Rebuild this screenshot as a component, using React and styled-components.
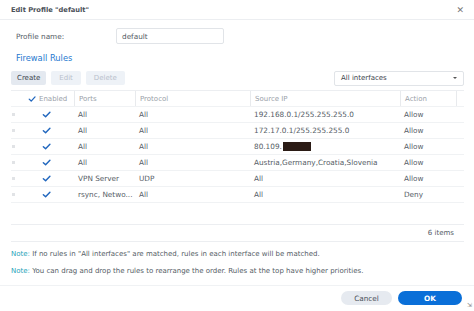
import React from 'react'
import styled, { createGlobalStyle } from 'styled-components'

const Global = createGlobalStyle`
  html, body { margin: 0; padding: 0; background: #fff; }
  body {
    width: 474px;
    height: 311px;
    overflow: hidden;
    font-family: "DejaVu Sans", Verdana, sans-serif;
    color: #555d66;
  }
`

const Dialog = styled.div`
  width: 474px;
  height: 311px;
  display: flex;
  flex-direction: column;
  position: relative;
`

const Header = styled.div`
  height: 19px;
  display: flex;
  align-items: center;
  justify-content: space-between;
  padding: 0 10px 0 11px;
  border-bottom: 1px solid #eceef1;
  font-size: 6.7px;
  font-weight: bold;
  color: #4a5058;
`

const Close = styled.span`
  font-size: 9px;
  font-weight: normal;
  color: #777;
`

const Body = styled.div`
  padding: 0 10px 0 11px;
  display: flex;
  flex-direction: column;
`

const FieldRow = styled.div`
  margin-top: 8px;
  height: 16px;
  display: flex;
  align-items: center;
  font-size: 7.3px;
`

const Label = styled.span`
  width: 100px;
  padding-left: 5px;
`

const Input = styled.div`
  width: 101px;
  height: 14px;
  border: 1px solid #e1e4e8;
  border-radius: 2px;
  padding-left: 5px;
  display: flex;
  align-items: center;
`

const SectionTitle = styled.div`
  margin-top: 8px;
  padding-left: 5px;
  height: 13px;
  line-height: 13px;
  font-size: 8.3px;
  color: #1f79cf;
`

const Toolbar = styled.div`
  margin-top: 6px;
  height: 14px;
  display: flex;
  align-items: center;
  gap: 5px;
`

const Button = styled.div`
  height: 14px;
  padding: 0 ${p => p.$pad || 6}px;
  border-radius: 2px;
  display: flex;
  align-items: center;
  font-size: 7px;
  background: ${p => (p.$disabled ? '#eef2f7' : '#e4e9f0')};
  color: ${p => (p.$disabled ? '#b9c1cc' : '#3d444c')};
`

const Select = styled.div`
  margin-left: auto;
  width: 116px;
  height: 13px;
  border: 1px solid #e1e4e8;
  border-radius: 2px;
  padding: 0 6px;
  display: flex;
  align-items: center;
  justify-content: space-between;
  font-size: 7px;
  color: #3d444c;
`

const Caret = styled.span`
  width: 0;
  height: 0;
  border-left: 2px solid transparent;
  border-right: 2px solid transparent;
  border-top: 2.5px solid #555;
`

const Table = styled.div`
  margin-top: 5px;
  border-top: 1px solid #eceef1;
  display: flex;
  flex-direction: column;
  height: 151px;
`

const Row = styled.div`
  height: 16px;
  display: grid;
  grid-template-columns: 13px 50px 61px 115px 150px 56px 1fr;
  align-items: center;
  border-bottom: 1px solid #f0f2f4;
  box-sizing: border-box;
  font-size: ${p => (p.$head ? 7 : 7.3)}px;
  color: ${p => (p.$head ? '#9aa1a9' : '#555d66')};
`

const Cell = styled.div`
  height: 100%;
  display: flex;
  align-items: center;
  padding-left: ${p => p.$pad ?? 4}px;
  gap: 3px;
  white-space: nowrap;
  overflow: hidden;
  border-left: ${p => (p.$sep ? '1px solid #e8eaed' : 'none')};
  box-sizing: border-box;
`

const Handle = styled.span`
  width: 3px;
  height: 3px;
  margin-left: 1px;
  background: #e1e3e6;
`

const Redacted = styled.span`
  display: inline-block;
  width: 28px;
  height: 9px;
  background: #2b1b15;
  margin-left: 1px;
  vertical-align: middle;
`

const Filler = styled.div`
  flex: 1;
  border-bottom: 1px solid #eceef1;
`

const Count = styled.div`
  height: 16px;
  display: flex;
  align-items: center;
  justify-content: flex-end;
  padding-right: 10px;
  border-bottom: 1px solid #eceef1;
  font-size: 7px;
`

const Notes = styled.div`
  padding: 6px 0 0 11px;
  display: flex;
  flex-direction: column;
  gap: 5px;
  font-size: 7px;
  height: 44px;
  box-sizing: border-box;
  border-bottom: 1px solid #f0f2f4;
`

const Note = styled.div`
  height: 12px;
  line-height: 12px;
  white-space: nowrap;
  b { font-weight: normal; color: #27a4b9; }
`

const Footer = styled.div`
  display: flex;
  justify-content: flex-end;
  gap: 6px;
  padding: 5px 12px 0 0;
`

const DialogButton = styled.div`
  height: 14px;
  width: ${p => p.$w}px;
  border-radius: 7px;
  display: flex;
  align-items: center;
  justify-content: center;
  font-size: 7.3px;
  background: ${p => (p.$primary ? '#0a6fd8' : '#e6eaf0')};
  color: ${p => (p.$primary ? '#fff' : '#4a5058')};
  font-weight: ${p => (p.$primary ? 'bold' : 'normal')};
`

const Grip = styled.span`
  position: absolute;
  right: 2px;
  bottom: 3px;
  font-size: 6px;
  color: #888;
`

const Check = ({ size = 9 }) => (
  <svg width={size} height={size} viewBox="0 0 10 10">
    <polyline points="1.5,5.2 4,7.6 8.8,2.4" fill="none" stroke="#2167be" strokeWidth="1.6" strokeLinecap="round" strokeLinejoin="round" />
  </svg>
)

const rules = [
  ['All', 'All', '192.168.0.1/255.255.255.0', 'Allow'],
  ['All', 'All', '172.17.0.1/255.255.255.0', 'Allow'],
  ['All', 'All', 'redacted', 'Allow'],
  ['All', 'All', 'Austria,Germany,Croatia,Slovenia', 'Allow'],
  ['VPN Server', 'UDP', 'All', 'Allow'],
  ['rsync, Netwo...', 'All', 'All', 'Deny'],
]

export default function App() {
  return (
    <Dialog>
      <Global />
      <Header>
        <span>Edit Profile "default"</span>
        <Close>✕</Close>
      </Header>
      <Body>
        <FieldRow>
          <Label>Profile name:</Label>
          <Input>default</Input>
        </FieldRow>
        <SectionTitle>Firewall Rules</SectionTitle>
        <Toolbar>
          <Button>Create</Button>
          <Button $disabled $pad={8}>Edit</Button>
          <Button $disabled $pad={8}>Delete</Button>
          <Select>
            <span>All interfaces</span>
            <Caret />
          </Select>
        </Toolbar>
        <Table>
          <Row $head>
            <Cell $pad={0} />
            <Cell $pad={4}><Check size={8} />Enabled</Cell>
            <Cell $sep>Ports</Cell>
            <Cell $sep>Protocol</Cell>
            <Cell $sep>Source IP</Cell>
            <Cell $sep>Action</Cell>
            <Cell $sep />
          </Row>
          {rules.map((r, i) => (
            <Row key={i}>
              <Cell $pad={0}><Handle /></Cell>
              <Cell $pad={18}><Check /></Cell>
              <Cell>{r[0]}</Cell>
              <Cell>{r[1]}</Cell>
              <Cell>{r[2] === 'redacted' ? <span>80.109.<Redacted /></span> : r[2]}</Cell>
              <Cell>{r[3]}</Cell>
              <Cell />
            </Row>
          ))}
          <Filler />
          <Count>6 items</Count>
        </Table>
      </Body>
      <Notes>
        <Note><b>Note:</b> If no rules in "All interfaces" are matched, rules in each interface will be matched.</Note>
        <Note><b>Note:</b> You can drag and drop the rules to rearrange the order. Rules at the top have higher priorities.</Note>
      </Notes>
      <Footer>
        <DialogButton $w={51}>Cancel</DialogButton>
        <DialogButton $w={64} $primary>OK</DialogButton>
      </Footer>
      <Grip>⇲</Grip>
    </Dialog>
  )
}
